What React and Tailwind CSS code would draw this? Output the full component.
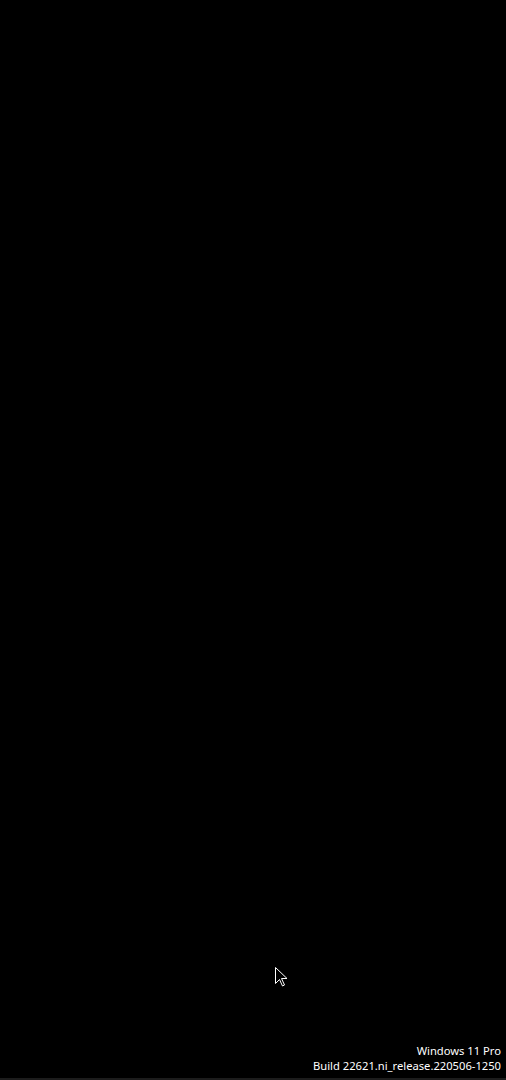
import React from 'react';

const Cursor = () => (
  <svg width="13" height="20" viewBox="0 0 13 20" className="absolute left-[275px] top-[967px]">
    <path d="M0.5 0.5 L0.5 16.5 L4.5 12.5 L7.5 19 L9.5 18 L6.5 11.5 L12 11.5 Z" fill="#000" stroke="#fff" strokeWidth="1" strokeLinejoin="miter" />
  </svg>
);

export default function App() {
  return (
    <div className="relative w-full h-[1080px] bg-black flex flex-col overflow-hidden">
      <div className="flex-1" />
      <Cursor />
      <div className="flex flex-col items-end pr-[5px] pb-[5px] text-white text-[11.2px] leading-[15px]" style={{ fontFamily: '"Noto Sans", "Open Sans", sans-serif' }}>
        <span>Windows 11 Pro</span>
        <span>Build 22621.ni_release.220506-1250</span>
      </div>
      <div className="h-[2px] bg-[#1c1c1c]" />
    </div>
  );
}
